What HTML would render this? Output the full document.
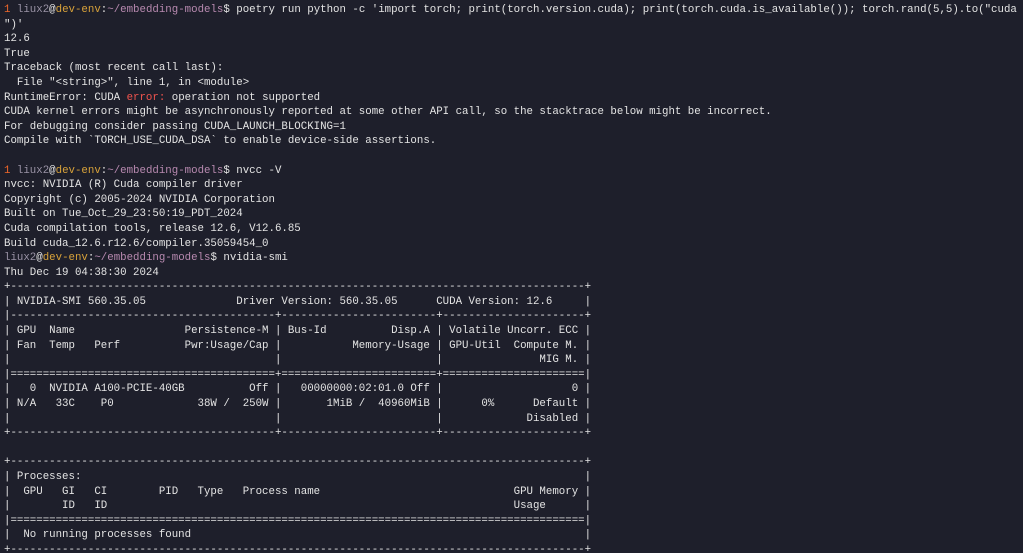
<!DOCTYPE html>
<html><head><meta charset="utf-8"><style>
html,body{margin:0;padding:0;background:#1e1f2b;width:1023px;height:553px;overflow:hidden}
pre{margin:0;padding:3px 0 0 4px;font-family:"Liberation Mono",monospace;font-size:10.76px;line-height:14.6px;color:#e4e4e4;white-space:pre}
.n{color:#f0672a}.u{color:#9a93a6}.h{color:#d8a23a}.p{color:#b88ab0}.e{color:#f0544e}
</style></head><body><pre><span class="n">1</span> <span class="u">liux2</span>@<span class="h">dev-env</span>:<span class="p">~/embedding-models</span>$ poetry run python -c 'import torch; print(torch.version.cuda); print(torch.cuda.is_available()); torch.rand(5,5).to("cuda
")'
12.6
True
Traceback (most recent call last):
  File "&lt;string&gt;", line 1, in &lt;module&gt;
RuntimeError: CUDA <span class="e">error:</span> operation not supported
CUDA kernel errors might be asynchronously reported at some other API call, so the stacktrace below might be incorrect.
For debugging consider passing CUDA_LAUNCH_BLOCKING=1
Compile with `TORCH_USE_CUDA_DSA` to enable device-side assertions.

<span class="n">1</span> <span class="u">liux2</span>@<span class="h">dev-env</span>:<span class="p">~/embedding-models</span>$ nvcc -V
nvcc: NVIDIA (R) Cuda compiler driver
Copyright (c) 2005-2024 NVIDIA Corporation
Built on Tue_Oct_29_23:50:19_PDT_2024
Cuda compilation tools, release 12.6, V12.6.85
Build cuda_12.6.r12.6/compiler.35059454_0
<span class="u">liux2</span>@<span class="h">dev-env</span>:<span class="p">~/embedding-models</span>$ nvidia-smi
Thu Dec 19 04:38:30 2024
+-----------------------------------------------------------------------------------------+
| NVIDIA-SMI 560.35.05              Driver Version: 560.35.05      CUDA Version: 12.6     |
|-----------------------------------------+------------------------+----------------------+
| GPU  Name                 Persistence-M | Bus-Id          Disp.A | Volatile Uncorr. ECC |
| Fan  Temp   Perf          Pwr:Usage/Cap |           Memory-Usage | GPU-Util  Compute M. |
|                                         |                        |               MIG M. |
|=========================================+========================+======================|
|   0  NVIDIA A100-PCIE-40GB          Off |   00000000:02:01.0 Off |                    0 |
| N/A   33C    P0             38W /  250W |       1MiB /  40960MiB |      0%      Default |
|                                         |                        |             Disabled |
+-----------------------------------------+------------------------+----------------------+

+-----------------------------------------------------------------------------------------+
| Processes:                                                                              |
|  GPU   GI   CI        PID   Type   Process name                              GPU Memory |
|        ID   ID                                                               Usage      |
|=========================================================================================|
|  No running processes found                                                             |
+-----------------------------------------------------------------------------------------+
</pre></body></html>
